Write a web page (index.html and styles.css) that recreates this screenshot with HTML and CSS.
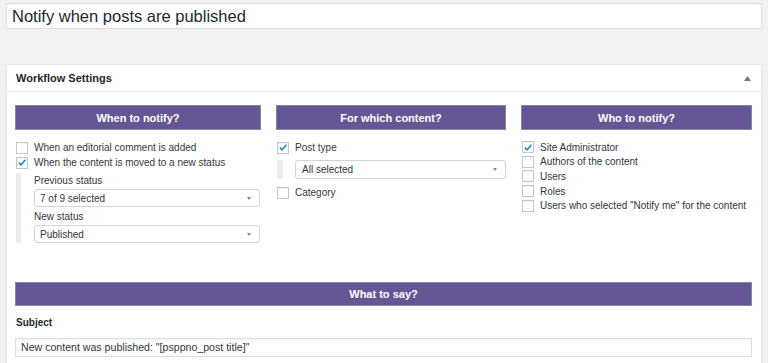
FILE: index.html
```html
<!DOCTYPE html>
<html lang="en">
<head>
<meta charset="utf-8">
<title>Notify when posts are published</title>
<link rel="stylesheet" href="styles.css">
</head>
<body>
<div class="page">
  <div class="title-input">Notify when posts are published</div>

  <div class="panel">
    <div class="panel-head">
      <span class="panel-title">Workflow Settings</span>
      <svg class="toggle" width="7" height="5" viewBox="0 0 7 5"><path d="M0 5 L3.5 0 L7 5 Z" fill="#72777c"/></svg>
    </div>
    <div class="panel-body">
      <div class="cols">
        <div class="col">
          <div class="col-head">When to notify?</div>
          <div class="col-content">
            <div class="opt"><span class="cb"></span><span>When an editorial comment is added</span></div>
            <div class="opt"><span class="cb checked"><svg viewBox="0 0 12 12"><path d="M2.2 6.2 L4.8 8.8 L10.2 2.6" fill="none" stroke="#1e8cbe" stroke-width="1.9"/></svg></span><span>When the content is moved to a new status</span></div>
            <div class="sub">
              <div class="strip"></div>
              <div class="sub-body">
                <div class="lbl">Previous status</div>
                <div class="sel"><span>7 of 9 selected</span><span class="arr"></span></div>
                <div class="lbl lbl2">New status</div>
                <div class="sel"><span>Published</span><span class="arr"></span></div>
              </div>
            </div>
          </div>
        </div>
        <div class="col">
          <div class="col-head">For which content?</div>
          <div class="col-content">
            <div class="opt"><span class="cb checked"><svg viewBox="0 0 12 12"><path d="M2.2 6.2 L4.8 8.8 L10.2 2.6" fill="none" stroke="#1e8cbe" stroke-width="1.9"/></svg></span><span>Post type</span></div>
            <div class="sub sub-mid">
              <div class="strip strip-mid"></div>
              <div class="sub-body sub-body-mid">
                <div class="sel"><span>All selected</span><span class="arr"></span></div>
              </div>
            </div>
            <div class="opt opt-cat"><span class="cb"></span><span>Category</span></div>
          </div>
        </div>
        <div class="col">
          <div class="col-head">Who to notify?</div>
          <div class="col-content">
            <div class="opt opt-tight"><span class="cb checked"><svg viewBox="0 0 12 12"><path d="M2.2 6.2 L4.8 8.8 L10.2 2.6" fill="none" stroke="#1e8cbe" stroke-width="1.9"/></svg></span><span>Site Administrator</span></div>
            <div class="opt opt-tight"><span class="cb"></span><span>Authors of the content</span></div>
            <div class="opt opt-tight"><span class="cb"></span><span>Users</span></div>
            <div class="opt opt-tight"><span class="cb"></span><span>Roles</span></div>
            <div class="opt opt-tight"><span class="cb"></span><span>Users who selected "Notify me" for the content</span></div>
          </div>
        </div>
      </div>

      <div class="col-head wide">What to say?</div>
      <div class="field-label">Subject</div>
      <div class="text-input">New content was published: "[psppno_post title]"</div>
    </div>
  </div>
</div>
</body>
</html>
```

FILE: styles.css
```css
html, body {
  margin: 0;
  padding: 0;
  background: #f1f1f1;
}

body {
  font-family: "Liberation Sans", Arial, Helvetica, sans-serif;
  color: #32373c;
  font-size: 10px;
}

.page {
  padding: 3px 6px 0 6px;
}

.title-input {
  box-sizing: border-box;
  height: 26px;
  background: #fff;
  border: 1px solid #dedede;
  box-shadow: inset 0 1px 2px rgba(0, 0, 0, 0.04);
  font-size: 16.5px;
  line-height: 24px;
  padding-left: 5px;
  color: #23282d;
}

.panel {
  margin-top: 35px;
  background: #fff;
  border: 1px solid #e5e5e5;
  border-bottom: none;
  box-shadow: 0 1px 1px rgba(0, 0, 0, 0.04);
}

.panel-head {
  height: 26px;
  border-bottom: 1px solid #eeeeee;
  display: flex;
  align-items: center;
  justify-content: space-between;
  padding: 0 10px 0 9px;
}

.panel-title {
  font-size: 11px;
  font-weight: bold;
  color: #23282d;
}

.toggle {
  display: block;
  margin-top: 1px;
}

.panel-body {
  padding: 13px 9px 6px 8px;
}

.cols {
  display: grid;
  grid-template-columns: 246px 230px 1fr;
  column-gap: 15px;
  align-items: start;
}

.col-head {
  box-sizing: border-box;
  height: 25px;
  background: #655796;
  border: 1px solid #7d8a99;
  color: #fff;
  font-weight: bold;
  font-size: 11px;
  display: flex;
  align-items: center;
  justify-content: center;
}

.col-content {
  padding-top: 10px;
}

.opt {
  display: flex;
  align-items: center;
  height: 15px;
  white-space: nowrap;
}

.opt-tight {
  height: 14.6px;
}

.cb {
  box-sizing: border-box;
  flex: none;
  width: 12px;
  height: 12px;
  margin-left: 1px;
  margin-right: 6px;
  border: 1px solid #c3c6ca;
  background: #fff;
  box-shadow: inset 0 1px 1px rgba(0, 0, 0, 0.06);
  display: flex;
  align-items: center;
  justify-content: center;
}

.cb svg {
  width: 11px;
  height: 11px;
  display: block;
}

.sub {
  display: flex;
  margin-top: 3px;
}

.strip {
  flex: none;
  width: 5px;
  margin-left: 1px;
  background: #ececec;
}

.sub-body {
  flex: 1;
  margin-left: 13px;
  margin-right: 1px;
}

.lbl {
  line-height: 16px;
}

.lbl2 {
  margin-top: 2px;
}

.sel {
  box-sizing: border-box;
  height: 18px;
  border: 1px solid #d4d4d4;
  border-radius: 3px;
  background: #fff;
  display: flex;
  align-items: center;
  justify-content: space-between;
  padding: 0 8px 0 5px;
}

.arr {
  width: 0;
  height: 0;
  border-left: 2.5px solid transparent;
  border-right: 2.5px solid transparent;
  border-top: 3.5px solid #8a8a8a;
}

.sub-mid {
  margin-top: 5px;
}

.strip-mid {
  width: 6px;
}

.sub-body-mid {
  margin-left: 12px;
  margin-right: 0;
}

.sub-body-mid .sel {
  height: 19px;
  padding-left: 6px;
}

.opt-cat {
  margin-top: 6px;
}

.wide {
  margin-top: 39px;
  height: 24px;
}

.field-label {
  margin-top: 10px;
  line-height: 14px;
  font-weight: bold;
  color: #23282d;
  padding-left: 1px;
}

.text-input {
  box-sizing: border-box;
  margin-top: 8px;
  height: 19px;
  border: 1px solid #dedede;
  box-shadow: inset 0 1px 2px rgba(0, 0, 0, 0.05);
  font-size: 10.6px;
  line-height: 17px;
  padding-left: 5px;
  color: #32373c;
}
```
